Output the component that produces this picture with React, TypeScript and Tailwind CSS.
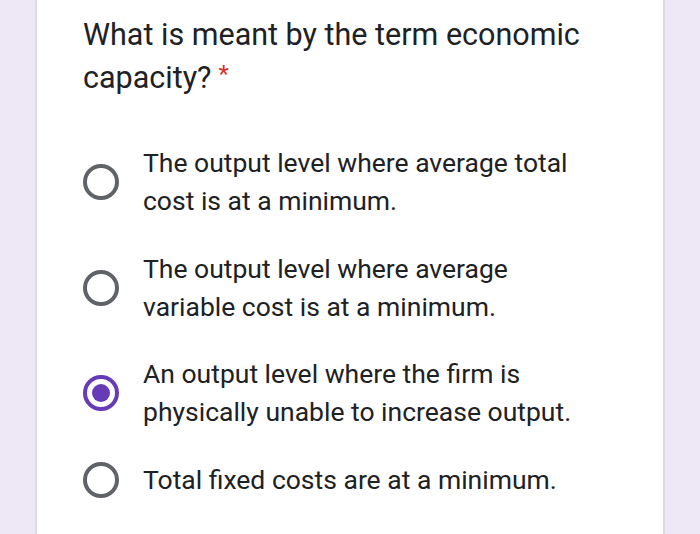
import React from 'react';

const options = [
  { text: 'The output level where average total cost is at a minimum.', checked: false },
  { text: 'The output level where average variable cost is at a minimum.', checked: false },
  { text: 'An output level where the firm is physically unable to increase output.', checked: true },
  { text: 'Total fixed costs are at a minimum.', checked: false },
];

function Radio({ checked }: { checked: boolean }) {
  if (checked) {
    return (
      <span className="flex h-[36px] w-[36px] shrink-0 items-center justify-center rounded-full border-[4px] border-[#673ab7]">
        <span className="h-[18px] w-[18px] rounded-full bg-[#673ab7]" />
      </span>
    );
  }
  return <span className="block h-[36px] w-[36px] shrink-0 rounded-full border-[4px] border-[#5f6368]" />;
}

export default function App() {
  return (
    <div className="flex min-h-[534px] bg-[#ede7f6]" style={{ fontFamily: 'Roboto, "Liberation Sans", sans-serif' }}>
      <div className="ml-[35px] w-[630px] border-x-2 border-[#dadce0] bg-white pl-[46px] pr-[40px] pt-[13px]">
        <h1 className="text-[30.5px] leading-[43px] text-[#202124]">
          What is meant by the term economic capacity?
          <span className="ml-[7px] align-top text-[24px] leading-[36px] text-[#d93025]">*</span>
        </h1>
        <div className="mt-[45px] flex flex-col gap-[29.5px]">
          {options.map((o) => (
            <div key={o.text} className="flex items-center gap-[24px]">
              <Radio checked={o.checked} />
              <p className="max-w-[462px] text-[26.5px] leading-[38px] text-[#202124]">{o.text}</p>
            </div>
          ))}
        </div>
      </div>
    </div>
  );
}
